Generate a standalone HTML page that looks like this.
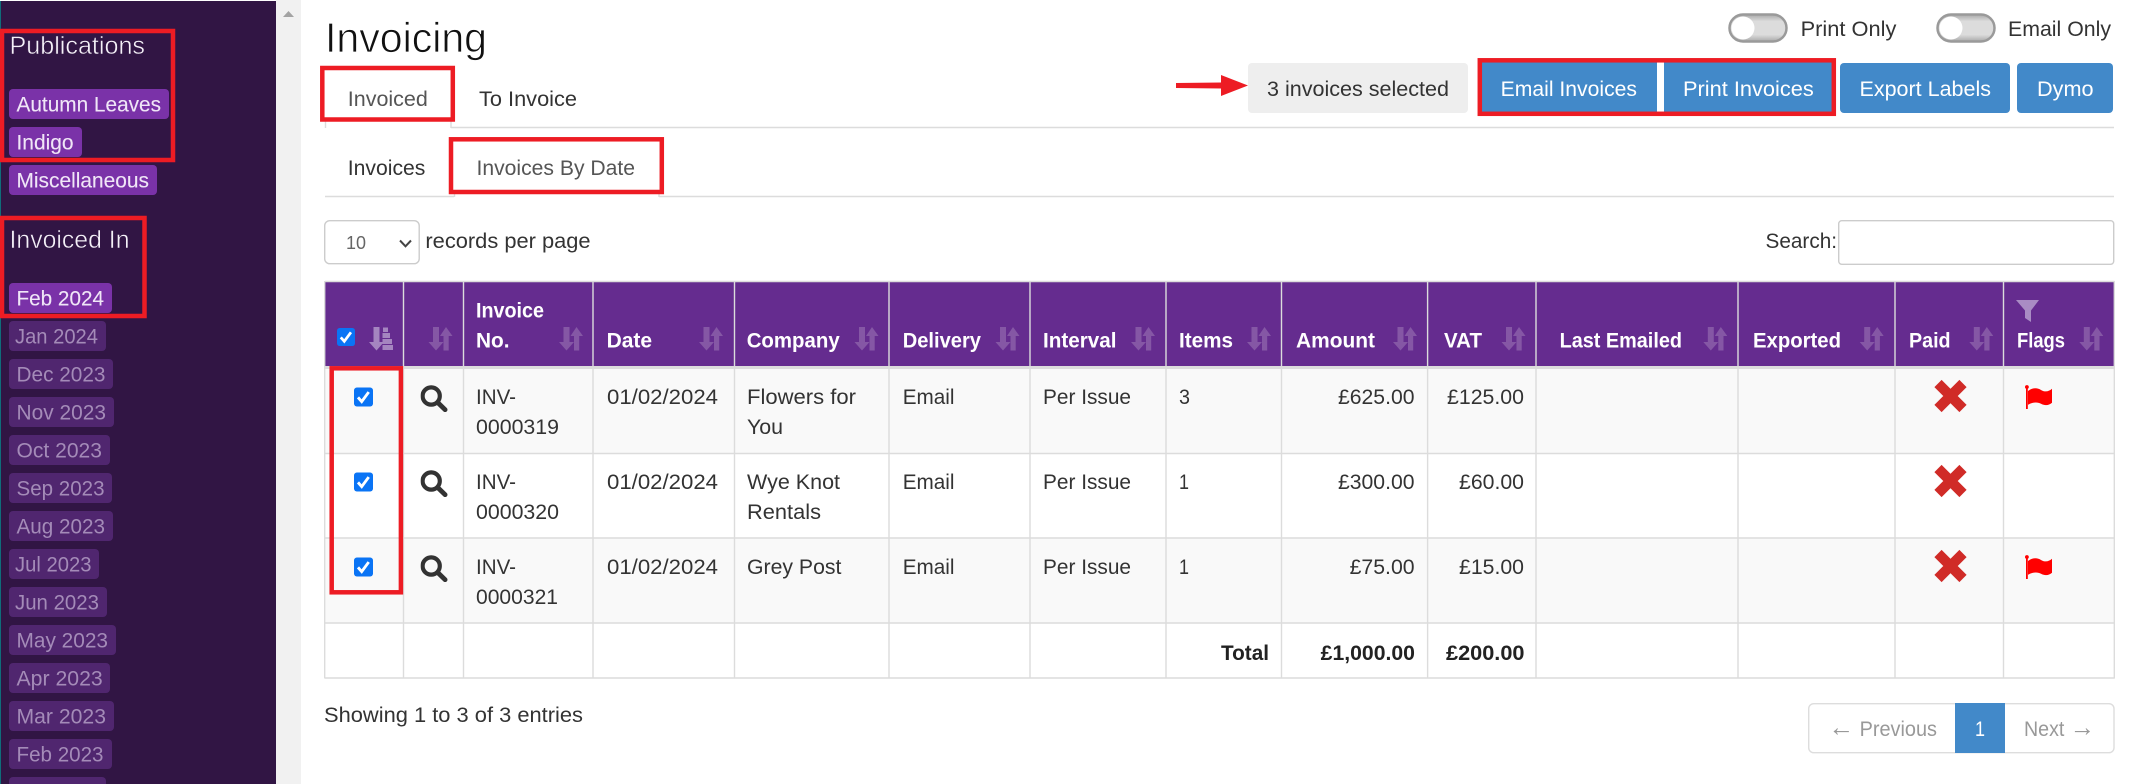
<!DOCTYPE html>
<html lang="en">
<head>
<meta charset="utf-8">
<title>Invoicing</title>
<style>
html,body{margin:0;padding:0;background:#fff;width:2132px;height:784px;overflow:hidden}
svg{display:block}
text{font-family:"Liberation Sans",Arial,sans-serif;font-size:21px;fill:#333;white-space:pre}
.h{font-weight:bold;font-size:21px;fill:#fff}
.lb{fill:#f0e6f7;stroke:#f0e6f7;stroke-width:.1}
.li{fill:#a48bb8}
.side{font-size:25px;fill:#f5f1f8;stroke:#311544;stroke-width:.5}
.tot{font-weight:bold;fill:#222}
.btn{fill:#fff}
.tab{fill:#555}
.pg{fill:#999}
.al{fill:#7a32a8}
.il{fill:#50266f}
.grid{stroke:#dcdcdc;stroke-width:1.4;fill:none}
.red{fill:none;stroke:#ed1c24;stroke-width:4.5}
</style>
</head>
<body>
<svg xmlns="http://www.w3.org/2000/svg" width="2132" height="784" viewBox="0 0 2132 784">
<defs>
<symbol id="sort" viewBox="0 0 24 24"><path d="M4.5 0h6v15h4.500L7.500 23.500 0 15h4.500zM11.500 9L17.500 0 24 9h-3.800v14.500h-5.200V9z" fill="#8557a5"/></symbol>
<symbol id="chk" viewBox="0 0 20 20"><rect width="20" height="20" rx="3" fill="#0a74f5"/><path d="M4.200 10.400l3.900 4.400 7.400-10" fill="none" stroke="#fff" stroke-width="3"/></symbol>
<symbol id="mag" viewBox="0 0 27 27"><circle cx="10.500" cy="11" r="8.600" fill="none" stroke="#333" stroke-width="4.200"/><path d="M17 17.500l7.400 7.200" stroke="#333" stroke-width="4.800" stroke-linecap="round"/></symbol>
<symbol id="x" viewBox="0 0 34 34"><path d="M4.500 4.500L29.500 29.500M29.500 4.500L4.500 29.500" stroke="#d02b27" stroke-width="10.200"/></symbol>
<symbol id="flag" viewBox="0 0 28 24"><rect x="1" y="1" width="1.800" height="23" fill="#f00"/><circle cx="1.900" cy="2" r="1.900" fill="#f00"/><path d="M3 6C8 2 13 3 16 5c4 2.500 8 1.500 11-1.200v14c-3 2.700-7 3.200-11 1-3-1.800-8-2-13 1z" fill="#f00"/></symbol>
<linearGradient id="tg" x1="0" y1="0" x2="0" y2="1"><stop offset="0" stop-color="#a8a8a8"/><stop offset=".25" stop-color="#dcdcdc"/><stop offset=".75" stop-color="#dcdcdc"/><stop offset="1" stop-color="#a8a8a8"/></linearGradient>
</defs>

<!-- sidebar -->
<rect x="0" y="1" width="1" height="783" fill="#0f6d7a"/>
<rect x="1" y="1" width="275" height="783" fill="#311544"/>
<rect x="276" y="0" width="25" height="784" fill="#f1f1f1"/>
<path d="M288.500 11l5.500 6h-11z" fill="#a3a3a3"/>

<text class="side" x="9.500" y="54" textLength="135.500" lengthAdjust="spacingAndGlyphs">Publications</text>
<rect class="al" x="9" y="89" width="160" height="30" rx="4"/><text class="lb" x="16.500" y="111.700" textLength="144.500" lengthAdjust="spacingAndGlyphs">Autumn Leaves</text>
<rect class="al" x="9" y="127" width="73" height="30" rx="4"/><text class="lb" x="16.500" y="149.700" textLength="57" lengthAdjust="spacingAndGlyphs">Indigo</text>
<rect class="al" x="9" y="165" width="148" height="30" rx="4"/><text class="lb" x="16.500" y="187.700" textLength="132.500" lengthAdjust="spacingAndGlyphs">Miscellaneous</text>
<text class="side" x="9.500" y="248" textLength="120" lengthAdjust="spacingAndGlyphs">Invoiced In</text>
<rect class="al" x="9" y="283" width="103" height="30" rx="4"/><text class="lb" x="16.500" y="305.700" textLength="87.500" lengthAdjust="spacingAndGlyphs">Feb 2024</text>
<rect class="il" x="9" y="321" width="97" height="30" rx="4"/><text class="li" x="15" y="343.700" textLength="83" lengthAdjust="spacingAndGlyphs">Jan 2024</text>
<rect class="il" x="9" y="359" width="104" height="30" rx="4"/><text class="li" x="16.500" y="381.700" textLength="89" lengthAdjust="spacingAndGlyphs">Dec 2023</text>
<rect class="il" x="9" y="397" width="105" height="30" rx="4"/><text class="li" x="16.500" y="419.700" textLength="89.500" lengthAdjust="spacingAndGlyphs">Nov 2023</text>
<rect class="il" x="9" y="435" width="101" height="30" rx="4"/><text class="li" x="16.500" y="457.700" textLength="85.500" lengthAdjust="spacingAndGlyphs">Oct 2023</text>
<rect class="il" x="9" y="473" width="103" height="30" rx="4"/><text class="li" x="16.500" y="495.700" textLength="88" lengthAdjust="spacingAndGlyphs">Sep 2023</text>
<rect class="il" x="9" y="511" width="104" height="30" rx="4"/><text class="li" x="16.500" y="533.700" textLength="88.500" lengthAdjust="spacingAndGlyphs">Aug 2023</text>
<rect class="il" x="9" y="549" width="90" height="30" rx="4"/><text class="li" x="15" y="571.700" textLength="76.500" lengthAdjust="spacingAndGlyphs">Jul 2023</text>
<rect class="il" x="9" y="587" width="98" height="30" rx="4"/><text class="li" x="15" y="609.700" textLength="84" lengthAdjust="spacingAndGlyphs">Jun 2023</text>
<rect class="il" x="9" y="625" width="107" height="30" rx="4"/><text class="li" x="16.500" y="647.700" textLength="91.500" lengthAdjust="spacingAndGlyphs">May 2023</text>
<rect class="il" x="9" y="663" width="101" height="30" rx="4"/><text class="li" x="16.500" y="685.700" textLength="86.200" lengthAdjust="spacingAndGlyphs">Apr 2023</text>
<rect class="il" x="9" y="701" width="105" height="30" rx="4"/><text class="li" x="16.500" y="723.700" textLength="89.500" lengthAdjust="spacingAndGlyphs">Mar 2023</text>
<rect class="il" x="9" y="739" width="103" height="30" rx="4"/><text class="li" x="16.500" y="761.700" textLength="87" lengthAdjust="spacingAndGlyphs">Feb 2023</text>
<rect class="il" x="9" y="777" width="97" height="30" rx="4"/>

<rect class="red" x="2" y="31" width="171" height="129"/>
<rect class="red" x="2" y="218" width="142.500" height="98"/>

<!-- heading & tabs -->
<text x="325" y="52" style="font-size:42px;fill:#111;stroke:#fff;stroke-width:.8" textLength="162" lengthAdjust="spacingAndGlyphs">Invoicing</text>
<path class="grid" d="M451 127.500H2114M325.500 121V128M451 121V128"/>
<text class="tab" x="347.800" y="106" textLength="80" lengthAdjust="spacingAndGlyphs">Invoiced</text>
<text x="479" y="106" textLength="98" lengthAdjust="spacingAndGlyphs">To Invoice</text>
<path class="grid" d="M325 196.500H454M659 196.500H2114M454.500 190V197M659 190V197"/>
<text x="347.800" y="175" textLength="77.600" lengthAdjust="spacingAndGlyphs">Invoices</text>
<text class="tab" x="476.500" y="175" textLength="158.500" lengthAdjust="spacingAndGlyphs">Invoices By Date</text>
<rect class="red" x="322.300" y="68" width="130.500" height="51.500"/>
<rect class="red" x="451" y="139.300" width="210.800" height="52.700"/>

<!-- toggles -->
<rect x="1729.500" y="14.500" width="57" height="27" rx="13.500" fill="url(#tg)" stroke="#9a9a9a" stroke-width="2.500"/>
<circle cx="1743" cy="28" r="11.500" fill="#fff"/>
<text x="1800.600" y="36" textLength="95.800" lengthAdjust="spacingAndGlyphs">Print Only</text>
<rect x="1937.500" y="14.500" width="57" height="27" rx="13.500" fill="url(#tg)" stroke="#9a9a9a" stroke-width="2.500"/>
<circle cx="1951" cy="28" r="11.500" fill="#fff"/>
<text x="2008" y="36" textLength="103" lengthAdjust="spacingAndGlyphs">Email Only</text>

<!-- action bar -->
<path d="M1176 83L1221 82.500V75L1248 85.500 1221 96V88.500L1176 88z" fill="#ed1c24"/>
<rect x="1248" y="63" width="220" height="50" rx="4" fill="#eee"/>
<text x="1267" y="96" textLength="182" lengthAdjust="spacingAndGlyphs">3 invoices selected</text>
<rect x="1482" y="62" width="175" height="50" fill="#4289c9"/>
<rect x="1664" y="62" width="168" height="50" fill="#4289c9"/>
<rect class="red" x="1479.800" y="60.300" width="354" height="53.500"/>
<text class="btn" x="1500.700" y="96" textLength="136.300" lengthAdjust="spacingAndGlyphs">Email Invoices</text>
<text class="btn" x="1683" y="96" textLength="130.800" lengthAdjust="spacingAndGlyphs">Print Invoices</text>
<rect x="1840" y="63" width="170" height="50" rx="4" fill="#4289c9"/>
<text class="btn" x="1859.500" y="96" textLength="131.500" lengthAdjust="spacingAndGlyphs">Export Labels</text>
<rect x="2017" y="63" width="96" height="50" rx="4" fill="#4289c9"/>
<text class="btn" x="2037" y="96" textLength="56.600" lengthAdjust="spacingAndGlyphs">Dymo</text>

<!-- length / search -->
<rect x="324.700" y="220.700" width="94.500" height="43" rx="5" fill="#fff" stroke="#ccc" stroke-width="1.400"/>
<text x="346" y="249" style="font-size:18px;fill:#666" textLength="20" lengthAdjust="spacingAndGlyphs">10</text>
<path d="M400 240.500l5.500 5.800 5.500-5.800" fill="none" stroke="#444" stroke-width="2"/>
<text x="425.400" y="248" textLength="165.200" lengthAdjust="spacingAndGlyphs">records per page</text>
<text x="1765.500" y="248" textLength="71.500" lengthAdjust="spacingAndGlyphs">Search:</text>
<rect x="1838.700" y="220.700" width="275" height="43.600" rx="3" fill="#fff" stroke="#ccc" stroke-width="1.400"/>

<!-- table backgrounds -->
<rect x="325" y="282" width="1789" height="84" fill="#652c8f"/>
<rect x="325" y="366" width="1789" height="3" fill="#dcdcdc"/>
<rect x="325" y="369" width="1789" height="84" fill="#f9f9f9"/>
<rect x="325" y="538" width="1789" height="85" fill="#f9f9f9"/>
<path class="grid" d="M325 281.500H2114.500M325 453.500H2114.500M325 538H2114.500M325 623H2114.500M325 678H2114.500M324.700 281V678.500M403.500 281V678.500M463.500 281V678.500M593 281V678.500M734.500 281V678.500M889 281V678.500M1030 281V678.500M1166 281V678.500M1281.500 281V678.500M1427.600 281V678.500M1536 281V678.500M1738 281V678.500M1895 281V678.500M2003.500 281V678.500M2114.300 281V678.500"/>

<!-- header -->
<use href="#chk" x="337" y="328" width="18" height="18"/>
<path d="M373.500 327h6v15h4.500l-7.500 8.500-7.500-8.500h4.500z" fill="#a585c0"/>
<path d="M383 327.500h5v4.500h-5zM382.500 333h7.500v5h-7.500zM382.500 339h9.500v5h-9.500zM382.500 345h10.500v5h-10.500z" fill="#a585c0"/>
<use href="#sort" x="428.500" y="327" width="24" height="24"/>
<text class="h" x="476" y="317.500" textLength="68" lengthAdjust="spacingAndGlyphs">Invoice</text>
<text class="h" x="476" y="347.500" textLength="33.500" lengthAdjust="spacingAndGlyphs">No.</text>
<use href="#sort" x="559" y="327" width="24" height="24"/>
<text class="h" x="606.600" y="347.500" textLength="45.500" lengthAdjust="spacingAndGlyphs">Date</text>
<use href="#sort" x="699" y="327" width="24" height="24"/>
<text class="h" x="746.700" y="347.500" textLength="93" lengthAdjust="spacingAndGlyphs">Company</text>
<use href="#sort" x="854.500" y="327" width="24" height="24"/>
<text class="h" x="902.700" y="347.500" textLength="78.300" lengthAdjust="spacingAndGlyphs">Delivery</text>
<use href="#sort" x="995.500" y="327" width="24" height="24"/>
<text class="h" x="1043" y="347.500" textLength="73.500" lengthAdjust="spacingAndGlyphs">Interval</text>
<use href="#sort" x="1131" y="327" width="24" height="24"/>
<text class="h" x="1179" y="347.500" textLength="54" lengthAdjust="spacingAndGlyphs">Items</text>
<use href="#sort" x="1247" y="327" width="24" height="24"/>
<text class="h" x="1296" y="347.500" textLength="79" lengthAdjust="spacingAndGlyphs">Amount</text>
<use href="#sort" x="1393" y="327" width="24" height="24"/>
<text class="h" x="1444" y="347.500" textLength="38" lengthAdjust="spacingAndGlyphs">VAT</text>
<use href="#sort" x="1501.500" y="327" width="24" height="24"/>
<text class="h" x="1559.600" y="347.500" textLength="122.400" lengthAdjust="spacingAndGlyphs">Last Emailed</text>
<use href="#sort" x="1703.300" y="327" width="24" height="24"/>
<text class="h" x="1753" y="347.500" textLength="88" lengthAdjust="spacingAndGlyphs">Exported</text>
<use href="#sort" x="1859.700" y="327" width="24" height="24"/>
<text class="h" x="1909" y="347.500" textLength="41.600" lengthAdjust="spacingAndGlyphs">Paid</text>
<use href="#sort" x="1969.300" y="327" width="24" height="24"/>
<path d="M2016 300h23l-8 10.500V322l-6-4v-7.500z" fill="#a98cc4"/>
<text class="h" x="2017" y="347.500" textLength="48" lengthAdjust="spacingAndGlyphs">Flags</text>
<use href="#sort" x="2079.300" y="327" width="24" height="24"/>

<!-- row 1 -->
<use href="#chk" x="354" y="387" width="19" height="20"/>
<use href="#mag" x="420.700" y="385" width="27" height="27"/>
<text x="476" y="404" textLength="40" lengthAdjust="spacingAndGlyphs">INV-</text>
<text x="476" y="434" textLength="83" lengthAdjust="spacingAndGlyphs">0000319</text>
<text x="607" y="404" textLength="111" lengthAdjust="spacingAndGlyphs">01/02/2024</text>
<text x="747" y="404" textLength="109" lengthAdjust="spacingAndGlyphs">Flowers for</text>
<text x="747" y="434" textLength="36" lengthAdjust="spacingAndGlyphs">You</text>
<text x="902.700" y="404" textLength="51.800" lengthAdjust="spacingAndGlyphs">Email</text>
<text x="1043" y="404" textLength="88" lengthAdjust="spacingAndGlyphs">Per Issue</text>
<text x="1179" y="404" textLength="11" lengthAdjust="spacingAndGlyphs">3</text>
<text x="1338" y="404" textLength="76.500" lengthAdjust="spacingAndGlyphs">£625.00</text>
<text x="1447" y="404" textLength="77" lengthAdjust="spacingAndGlyphs">£125.00</text>
<use href="#x" x="1933.500" y="379" width="34" height="34"/>
<use href="#flag" x="2025" y="385" width="28" height="24"/>

<!-- row 2 -->
<use href="#chk" x="354" y="472" width="19" height="20"/>
<use href="#mag" x="420.700" y="470" width="27" height="27"/>
<text x="476" y="489" textLength="40" lengthAdjust="spacingAndGlyphs">INV-</text>
<text x="476" y="519" textLength="83" lengthAdjust="spacingAndGlyphs">0000320</text>
<text x="607" y="489" textLength="111" lengthAdjust="spacingAndGlyphs">01/02/2024</text>
<text x="747" y="489" textLength="93" lengthAdjust="spacingAndGlyphs">Wye Knot</text>
<text x="747" y="519" textLength="74" lengthAdjust="spacingAndGlyphs">Rentals</text>
<text x="902.700" y="489" textLength="51.800" lengthAdjust="spacingAndGlyphs">Email</text>
<text x="1043" y="489" textLength="88" lengthAdjust="spacingAndGlyphs">Per Issue</text>
<text x="1179" y="489" textLength="10" lengthAdjust="spacingAndGlyphs">1</text>
<text x="1338" y="489" textLength="76.500" lengthAdjust="spacingAndGlyphs">£300.00</text>
<text x="1459" y="489" textLength="65" lengthAdjust="spacingAndGlyphs">£60.00</text>
<use href="#x" x="1933.500" y="464" width="34" height="34"/>

<!-- row 3 -->
<use href="#chk" x="354" y="557" width="19" height="20"/>
<use href="#mag" x="420.700" y="555" width="27" height="27"/>
<text x="476" y="574" textLength="40" lengthAdjust="spacingAndGlyphs">INV-</text>
<text x="476" y="604" textLength="82" lengthAdjust="spacingAndGlyphs">0000321</text>
<text x="607" y="574" textLength="111" lengthAdjust="spacingAndGlyphs">01/02/2024</text>
<text x="747" y="574" textLength="94.400" lengthAdjust="spacingAndGlyphs">Grey Post</text>
<text x="902.700" y="574" textLength="51.800" lengthAdjust="spacingAndGlyphs">Email</text>
<text x="1043" y="574" textLength="88" lengthAdjust="spacingAndGlyphs">Per Issue</text>
<text x="1179" y="574" textLength="10" lengthAdjust="spacingAndGlyphs">1</text>
<text x="1349.600" y="574" textLength="65" lengthAdjust="spacingAndGlyphs">£75.00</text>
<text x="1459" y="574" textLength="65" lengthAdjust="spacingAndGlyphs">£15.00</text>
<use href="#x" x="1933.500" y="549" width="34" height="34"/>
<use href="#flag" x="2025" y="555" width="28" height="24"/>

<!-- total -->
<text class="tot" x="1221" y="660" textLength="48" lengthAdjust="spacingAndGlyphs">Total</text>
<text class="tot" x="1320.700" y="660" textLength="94.300" lengthAdjust="spacingAndGlyphs">£1,000.00</text>
<text class="tot" x="1446" y="660" textLength="78.500" lengthAdjust="spacingAndGlyphs">£200.00</text>

<rect class="red" x="331.700" y="368.300" width="69.200" height="224"/>

<!-- footer -->
<text x="324" y="722" textLength="259" lengthAdjust="spacingAndGlyphs">Showing 1 to 3 of 3 entries</text>
<rect x="1808.700" y="703.700" width="305.300" height="49" rx="5" fill="#fff" stroke="#ddd" stroke-width="1.400"/>
<rect x="1955" y="703" width="50" height="50" fill="#4289c9"/>
<text class="pg" x="1828.500" y="736" textLength="108.500" lengthAdjust="spacingAndGlyphs"><tspan style="font-size:27px">←</tspan> Previous</text>
<text class="btn" x="1975" y="736" textLength="10" lengthAdjust="spacingAndGlyphs">1</text>
<text class="pg" x="2024" y="736" textLength="71" lengthAdjust="spacingAndGlyphs">Next <tspan style="font-size:27px">→</tspan></text>
</svg>
</body>
</html>
